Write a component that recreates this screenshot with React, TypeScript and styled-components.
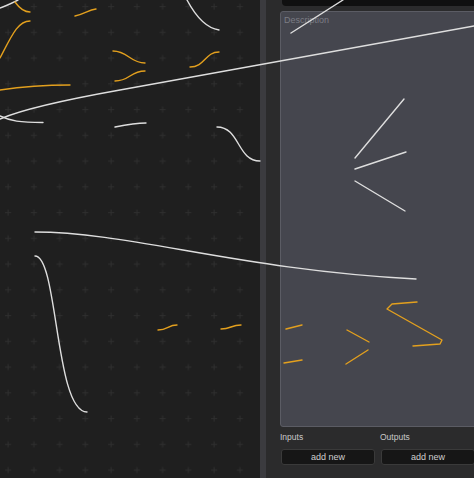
import styled, { createGlobalStyle } from 'styled-components'

const GlobalStyle = createGlobalStyle`
  html, body {
    margin: 0;
    padding: 0;
    overflow: hidden;
    background: #1f1f1f;
  }
`

const WHITE = '#dedede'
const ORANGE = '#e3a01e'

// wire fragments, page coordinates
const whiteWires = [
  'M0,8 C6,6 12,3 18,0',
  'M0,119 Q30,106 120,90 L474,26',
  'M0,116 C10,121 20,122.5 43,122.5',
  'M187,0 C195,15 205,28 219,30',
  'M115,127 C125,125 135,123 146,123',
  'M217,127 C240,127 237,161 260,161',
  'M35,232 C130,232 240,270 416,279',
  'M35,256 C58,256 55,412 87,412',
  'M291,33 L343,0',
  'M355,158 L404,99',
  'M355,169 L406,152',
  'M355,181 L405,211',
]

const orangeWires = [
  'M15,2 C20,9 24,12 30,12',
  'M0,58 C12,35 18,21 30,21',
  'M75,16 C85,14 88,10 96,9',
  'M113,51 C128,51 130,63 145,63',
  'M115,81 C130,81 130,71 145,71',
  'M190,67 C205,67 205,52 219,52',
  'M0,90 C20,87 40,85 70,85',
  'M158,330 C168,330 168,325 177,325',
  'M221,329 C231,329 231,325 241,325',
  'M286,329 L302,325',
  'M284,363 L302,360',
  'M347,330 L369,342',
  'M346,364 L368,350',
  'M417,302 L392,304 L387,309 L442,340 L440,344 L413,346',
]

export default function App() {
  return (
    <Page>
      <GlobalStyle />

      {/* Node canvas */}
      <Canvas>
        <GridSvg>
          <defs>
            <pattern id="plus" x="-4.875" y="-5.875" width="25.75" height="25.75" patternUnits="userSpaceOnUse">
              <rect x="10" y="12" width="6" height="1" fill="#2e2e2e" />
              <rect x="12.5" y="9.5" width="1" height="6" fill="#2e2e2e" />
            </pattern>
          </defs>
          <rect width="100%" height="100%" fill="url(#plus)" />
        </GridSvg>
      </Canvas>

      <Divider />

      {/* Side panel */}
      <Sidebar>
        <TitleBar>
          <TitleText>Title description</TitleText>
          <svg width="6" height="8" viewBox="0 0 6 8">
            <path d="M1,0 V6 L3,8 L5,6 V0 Z" fill="#fff" />
          </svg>
        </TitleBar>

        <DescriptionBox>
          <Placeholder>Description</Placeholder>
        </DescriptionBox>

        <PortGrid>
          <SectionLabel>Inputs</SectionLabel>
          <SectionLabel>Outputs</SectionLabel>
          <AddButton>add new</AddButton>
          <AddButton>add new</AddButton>
        </PortGrid>
      </Sidebar>

      {/* Wires drawn over everything */}
      <WireLayer width="474" height="478" viewBox="0 0 474 478">
        {whiteWires.map((d, i) => (
          <Wire key={'w' + i} d={d} $color={WHITE} />
        ))}
        {orangeWires.map((d, i) => (
          <Wire key={'o' + i} d={d} $color={ORANGE} />
        ))}
      </WireLayer>
    </Page>
  )
}

const Page = styled.div`
  position: relative;
  display: flex;
  width: 100vw;
  height: 100vh;
  overflow: hidden;
  font-family: 'Liberation Sans', Arial, sans-serif;
`

const Canvas = styled.div`
  flex: 0 0 260px;
  height: 100%;
  background: #1f1f1f;
`

const GridSvg = styled.svg`
  display: block;
  width: 100%;
  height: 100%;
`

const Divider = styled.div`
  flex: 0 0 6px;
  background: #3b3b3f;
`

const Sidebar = styled.div`
  flex: 0 0 200px;
  display: flex;
  flex-direction: column;
  padding-left: 14px;
  background: #2b2b2c;
`

const TitleBar = styled.div`
  height: 22px;
  margin: -16px 0 0 2px;
  display: flex;
  align-items: center;
  justify-content: center;
  gap: 14px;
  padding-left: 10px;
  background: #101010;
  border-radius: 4px;
`

const TitleText = styled.span`
  font-size: 9px;
  line-height: 10px;
  font-weight: bold;
  color: #f2f2f2;
`

const DescriptionBox = styled.div`
  height: 416px;
  margin-top: 5px;
  padding: 3px 3px;
  box-sizing: border-box;
  font-size: 9px;
  line-height: 11px;
  background: #45464e;
  border: 1px solid #5b5c64;
  border-radius: 3px;
`

const Placeholder = styled.div`
  color: #7b7c84;
`

const PortGrid = styled.div`
  display: grid;
  grid-template-columns: 95px 95px;
  column-gap: 5px;
`

const SectionLabel = styled.div`
  padding-top: 5px;
  height: 17px;
  box-sizing: border-box;
  line-height: 10px;
  font-size: 8.5px;
  color: #c9c9c9;
  margin-bottom: 5px;
`

const AddButton = styled.button`
  height: 16px;
  margin-left: 1px;
  padding: 0;
  background: #161616;
  border: 1px solid #3a3a3a;
  border-radius: 3px;
  font-family: inherit;
  font-size: 9px;
  color: #cfcfcf;
`

const WireLayer = styled.svg`
  position: absolute;
  left: 0;
  top: 0;
  pointer-events: none;
`

const Wire = styled.path<{ $color: string }>`
  fill: none;
  stroke: ${(p) => p.$color};
  stroke-width: 1.4;
  stroke-linecap: round;
  stroke-linejoin: round;
`
